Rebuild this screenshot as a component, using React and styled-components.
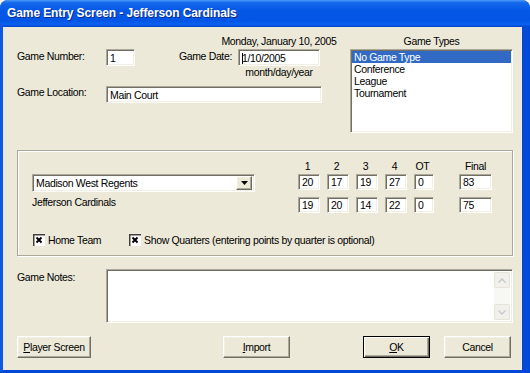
import React from 'react';
import styled, { createGlobalStyle, css } from 'styled-components';

const UI_FONT = `"Liberation Sans", Arial, sans-serif`;

const GlobalStyle = createGlobalStyle`
  html, body { margin: 0; padding: 0; background: #f4f3ee; }
  body { font-family: ${UI_FONT}; }
  *, *::before, *::after { box-sizing: border-box; }
`;

const sunken = css`
  border: 1px solid;
  border-color: #aca899 #ffffff #ffffff #aca899;
  box-shadow: inset 1px 1px 0 #716f64, inset -1px -1px 0 #f1efe2;
  background: #ffffff;
`;

const raised = css`
  border: 1px solid;
  border-color: #ffffff #716f64 #716f64 #ffffff;
  box-shadow: inset -1px -1px 0 #aca899, inset 1px 1px 0 #f1efe2;
  background: #ece9d8;
`;

const Window = styled.div`
  width: 530px;
  height: 373px;
  display: flex;
  flex-direction: column;
  border-radius: 8px 8px 0 0;
  overflow: hidden;
  background: #0453e2;
  font-family: ${UI_FONT};
  font-size: 10.5px;
  letter-spacing: -0.35px;
  color: #000;
`;

const TitleBar = styled.div`
  flex: none;
  height: 27px;
  display: flex;
  align-items: center;
  padding: 0 0 1px 7px;
  background: linear-gradient(
    to bottom,
    #4a9bfa 0%,
    #1468ec 10%,
    #0457e4 40%,
    #0356e6 78%,
    #0a62ee 90%,
    #0043cf 100%
  );
  color: #ffffff;
  font-weight: bold;
  font-size: 12px;
  letter-spacing: -0.1px;
  text-shadow: 1px 1px 0 #0a2a8c;
`;

const Frame = styled.div`
  flex: 1;
  display: flex;
  flex-direction: column;
  border-style: solid;
  border-color: #0a5ae6 #0349d8 #0347d6 #0a5ae6;
  border-width: 0 8px 3px 3px;
  background: #ece9d8;
  padding: 8px 9px 12px 14px;
`;

const TopArea = styled.div`
  display: flex;
  align-items: flex-start;
`;

const LeftCol = styled.div`
  width: 305px;
  display: flex;
  flex-direction: column;
`;

const FieldRow = styled.div`
  display: flex;
  align-items: flex-start;
  margin-top: ${(p) => p.$mt || 0}px;
`;

const Label = styled.span`
  flex: none;
  width: ${(p) => p.$w}px;
  margin-top: ${(p) => p.$mt || 0}px;
  line-height: 12px;
  white-space: nowrap;
  text-align: ${(p) => p.$align || 'left'};
  padding-right: ${(p) => p.$pr || 0}px;
`;

const Field = styled.div`
  ${sunken};
  flex: none;
  position: relative;
  width: ${(p) => p.$w}px;
  height: ${(p) => p.$h || 17}px;
  margin-top: ${(p) => p.$mt || 0}px;
  display: flex;
  align-items: center;
  padding-left: ${(p) => p.$pl || 3}px;
  line-height: 12px;
  white-space: nowrap;
`;

const Caret = styled.span`
  position: absolute;
  left: 3px;
  top: 3px;
  width: 1px;
  height: 11px;
  background: #000;
`;

const DateColumn = styled.div`
  flex: none;
  width: 82px;
  margin-left: 2px;
  display: flex;
  flex-direction: column;
  align-items: center;
`;

const Caption = styled.span`
  line-height: 12px;
  white-space: nowrap;
`;

const RightCol = styled.div`
  margin-left: auto;
  width: 163px;
  display: flex;
  flex-direction: column;
  align-items: center;
`;

const ListBox = styled.div`
  ${sunken};
  width: 100%;
  height: 84px;
  margin-top: 2px;
  padding: 1px;
`;

const ListItem = styled.div`
  line-height: 12px;
  padding-left: 2px;
  background: ${(p) => (p.$selected ? '#316ac5' : 'transparent')};
  color: ${(p) => (p.$selected ? '#ffffff' : '#000000')};
`;

const GroupBox = styled.div`
  margin-top: 17px;
  border: 1px solid #aca899;
  box-shadow: inset 1px 1px 0 #ffffff, 1px 1px 0 #ffffff;
  padding: 9px 14px 8px 14px;
  display: flex;
  flex-direction: column;
`;

const ScoreArea = styled.div`
  display: flex;
  align-items: flex-start;
`;

const TeamColumn = styled.div`
  flex: none;
  width: 223px;
  margin-top: 14px;
  display: flex;
  flex-direction: column;
`;

const Combo = styled.div`
  ${sunken};
  height: 18px;
  display: flex;
  align-items: center;
  padding: 2px 2px 2px 3px;
`;

const ComboText = styled.span`
  flex: 1;
  line-height: 12px;
`;

const ComboButton = styled.span`
  ${raised};
  flex: none;
  width: 16px;
  height: 14px;
  display: flex;
  align-items: center;
  justify-content: center;
`;

const TeamName = styled.span`
  margin-top: 4px;
  line-height: 12px;
`;

const ScoreTable = styled.div`
  margin-left: 43px;
  display: flex;
  flex-direction: column;
`;

const ScoreGrid = styled.div`
  display: grid;
  grid-template-columns: 22px 22px 22px 22px 20px 51px;
  column-gap: 7px;
  margin-top: ${(p) => p.$mt || 0}px;
`;

const ColHead = styled.span`
  line-height: 12px;
  text-align: center;
  padding-right: ${(p) => (p.$final ? 0 : 3)}px;
  width: ${(p) => (p.$final ? '33px' : 'auto')};
  justify-self: ${(p) => (p.$final ? 'end' : 'stretch')};
`;

const ScoreField = styled.div`
  ${sunken};
  height: 16px;
  width: ${(p) => (p.$final ? '33px' : '100%')};
  justify-self: ${(p) => (p.$final ? 'end' : 'stretch')};
  display: flex;
  align-items: center;
  padding-left: 3px;
  line-height: 12px;
`;

const CheckRow = styled.div`
  display: flex;
  align-items: center;
  height: 14px;
  margin-top: 20px;
  padding-left: 1px;
`;

const CheckItem = styled.span`
  flex: none;
  display: flex;
  align-items: center;
  gap: 3px;
  width: ${(p) => (p.$w ? `${p.$w}px` : 'auto')};
  line-height: 12px;
  white-space: nowrap;
`;

const CheckBox = styled.span`
  flex: none;
  width: 12px;
  height: 12px;
  display: block;
`;

const NotesRow = styled.div`
  display: flex;
  align-items: flex-start;
  margin-top: 13px;
`;

const NotesField = styled.div`
  ${sunken};
  flex: 1;
  height: 54px;
  display: flex;
  justify-content: flex-end;
  padding: 2px;
`;

const ScrollBar = styled.div`
  width: 16px;
  height: 100%;
  background: #f7f7f3;
  display: flex;
  flex-direction: column;
  justify-content: space-between;
`;

const ScrollButton = styled.div`
  width: 16px;
  height: 16px;
  border: 1px solid #e6e4da;
  border-radius: 2px;
  background: #f1f0ea;
  display: flex;
  align-items: center;
  justify-content: center;
`;

const ButtonRow = styled.div`
  display: flex;
  margin-top: 13px;
`;

const Button = styled.div`
  ${(p) =>
    p.$default
      ? css`
          border: 1px solid #000000;
          box-shadow: inset 1px 1px 0 #ffffff, inset -1px -1px 0 #716f64,
            inset -2px -2px 0 #aca899;
          background: #ece9d8;
        `
      : raised};
  flex: none;
  width: ${(p) => p.$w}px;
  height: 22px;
  margin-left: ${(p) => p.$ml || 0}px;
  display: flex;
  align-items: center;
  justify-content: center;
  line-height: 12px;
  white-space: nowrap;
`;

const Key = styled.span`
  text-decoration: underline;
  text-underline-offset: 1px;
`;

const DownArrow = () => (
  <svg width="7" height="4" viewBox="0 0 7 4">
    <path d="M0 0h7L3.5 4z" fill="#000" />
  </svg>
);

const Chevron = ({ up }) => (
  <svg width="8" height="5" viewBox="0 0 8 5">
    <path
      d={up ? 'M0.5 4.5L4 1l3.5 3.5' : 'M0.5 0.5L4 4l3.5-3.5'}
      fill="none"
      stroke="#c3c7d2"
      strokeWidth="1.3"
    />
  </svg>
);

const CheckMark = () => (
  <CheckBox>
    <svg width="12" height="12" viewBox="0 0 12 12">
      <rect x="0" y="0" width="12" height="12" fill="#ffffff" />
      <path d="M0.75 12V0.75H12" fill="none" stroke="#404040" strokeWidth="1.5" />
      <path d="M3.5 3.5l5 5M8.5 3.5l-5 5" stroke="#000" strokeWidth="2" />
    </svg>
  </CheckBox>
);

const gameTypes = ['No Game Type', 'Conference', 'League', 'Tournament'];
const headers = ['1', '2', '3', '4', 'OT'];
const scores = [
  ['20', '17', '19', '27', '0', '83'],
  ['19', '20', '14', '22', '0', '75'],
];

export default function App() {
  return (
    <>
      <GlobalStyle />
      <Window>
        <TitleBar>Game Entry Screen - Jefferson Cardinals</TitleBar>
        <Frame>
          <TopArea>
            <LeftCol>
              <FieldRow>
                <Label $w={89} $mt={15}>Game Number:</Label>
                <Field $w={29} $mt={14}>1</Field>
                <Label $w={101} $mt={15} $align="right" $pr={4}>
                  Game Date:
                </Label>
                <DateColumn>
                  <Caption>Monday, January 10, 2005</Caption>
                  <Field $w={82} $mt={2}>
                    <Caret />
                    1/10/2005
                  </Field>
                  <Caption>month/day/year</Caption>
                </DateColumn>
              </FieldRow>
              <FieldRow $mt={8}>
                <Label $w={89}>Game Location:</Label>
                <Field $w={216}>Main Court</Field>
              </FieldRow>
            </LeftCol>
            <RightCol>
              <Caption>Game Types</Caption>
              <ListBox>
                {gameTypes.map((t, i) => (
                  <ListItem key={t} $selected={i === 0}>
                    {t}
                  </ListItem>
                ))}
              </ListBox>
            </RightCol>
          </TopArea>

          <GroupBox>
            <ScoreArea>
              <TeamColumn>
                <Combo>
                  <ComboText>Madison West Regents</ComboText>
                  <ComboButton>
                    <DownArrow />
                  </ComboButton>
                </Combo>
                <TeamName>Jefferson Cardinals</TeamName>
              </TeamColumn>
              <ScoreTable>
                <ScoreGrid>
                  {headers.map((h) => (
                    <ColHead key={h}>{h}</ColHead>
                  ))}
                  <ColHead $final>Final</ColHead>
                </ScoreGrid>
                {scores.map((row, r) => (
                  <ScoreGrid key={r} $mt={r === 0 ? 2 : 7}>
                    {row.map((v, c) => (
                      <ScoreField key={c} $final={c === 5}>
                        {v}
                      </ScoreField>
                    ))}
                  </ScoreGrid>
                ))}
              </ScoreTable>
            </ScoreArea>
            <CheckRow>
              <CheckItem $w={96}>
                <CheckMark />
                Home Team
              </CheckItem>
              <CheckItem>
                <CheckMark />
                Show Quarters (entering points by quarter is optional)
              </CheckItem>
            </CheckRow>
          </GroupBox>

          <NotesRow>
            <Label $w={89} $mt={2}>Game Notes:</Label>
            <NotesField>
              <ScrollBar>
                <ScrollButton>
                  <Chevron up />
                </ScrollButton>
                <ScrollButton>
                  <Chevron />
                </ScrollButton>
              </ScrollBar>
            </NotesField>
          </NotesRow>

          <ButtonRow>
            <Button $w={74}>
              <Key>P</Key>layer Screen
            </Button>
            <Button $w={67} $ml={132}>
              <Key>I</Key>mport
            </Button>
            <Button $w={67} $ml={73} $default>
              <Key>O</Key>K
            </Button>
            <Button $w={67} $ml={14}>
              Cancel
            </Button>
          </ButtonRow>
        </Frame>
      </Window>
    </>
  );
}
